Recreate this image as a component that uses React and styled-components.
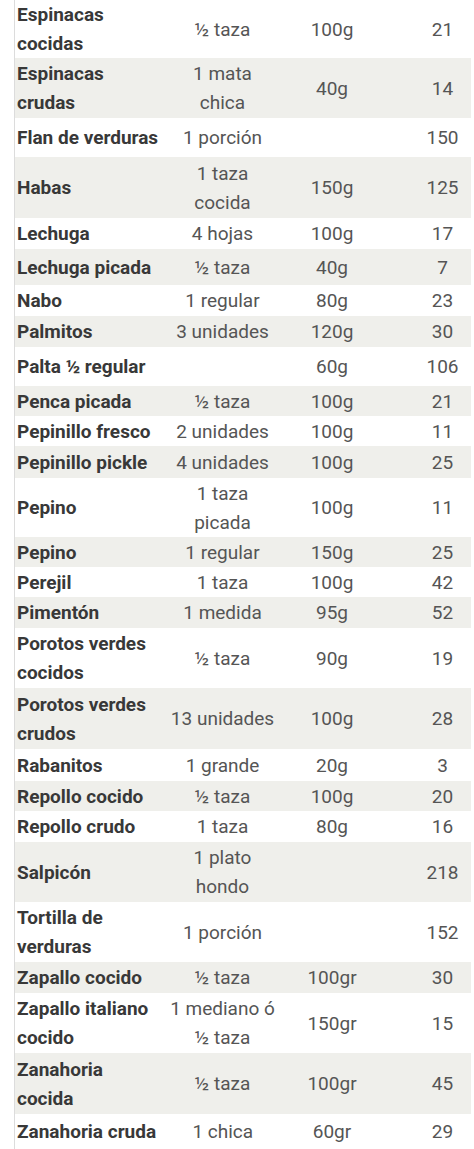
import React from "react";
import styled, { createGlobalStyle } from "styled-components";

const Global = createGlobalStyle`
  html, body { margin: 0; padding: 0; background: #ffffff; }
  body { font-family: Roboto, "Liberation Sans", Arial, sans-serif; }
`;

const Page = styled.div`
  width: 474px;
  height: 1149px;
  overflow: hidden;
  background: #ffffff;
`;

const Table = styled.table`
  margin-left: 14px;
  width: 456px;
  border-collapse: collapse;
  table-layout: fixed;
  border-left: 1px solid #dcdcdc;
  font-size: 19px;
  line-height: 29px;
`;

const Row = styled.tr`
  height: ${(p) => p.$h}px;
  background: ${(p) => (p.$shade ? "#efefeb" : "#ffffff")};
`;

const NameCell = styled.td`
  width: 148px;
  padding: 0 0 0 2px;
  font-weight: 700;
  color: #383838;
  white-space: pre-line;
  vertical-align: middle;
  text-align: left;
`;

const ValueCell = styled.td`
  width: ${(p) => p.$w - (p.$pl || 0)}px;
  padding: 0 0 0 ${(p) => p.$pl || 0}px;
  font-weight: 400;
  color: #555555;
  white-space: pre-line;
  vertical-align: middle;
  text-align: center;
`;

const rows = [
  ["Espinacas\ncocidas", "½ taza", "100g", "21", 58],
  ["Espinacas\ncrudas", "1 mata\nchica", "40g", "14", 60],
  ["Flan de verduras", "1 porción", "", "150", 39],
  ["Habas", "1 taza\ncocida", "150g", "125", 61],
  ["Lechuga", "4 hojas", "100g", "17", 31],
  ["Lechuga picada", "½ taza", "40g", "7", 36],
  ["Nabo", "1 regular", "80g", "23", 31],
  ["Palmitos", "3 unidades", "120g", "30", 31],
  ["Palta ½ regular", "", "60g", "106", 39],
  ["Penca picada", "½ taza", "100g", "21", 30],
  ["Pepinillo fresco", "2 unidades", "100g", "11", 30],
  ["Pepinillo pickle", "4 unidades", "100g", "25", 32],
  ["Pepino", "1 taza\npicada", "100g", "11", 59],
  ["Pepino", "1 regular", "150g", "25", 30],
  ["Perejil", "1 taza", "100g", "42", 30],
  ["Pimentón", "1 medida", "95g", "52", 31],
  ["Porotos verdes\ncocidos", "½ taza", "90g", "19", 60],
  ["Porotos verdes\ncrudos", "13 unidades", "100g", "28", 61],
  ["Rabanitos", "1 grande", "20g", "3", 32],
  ["Repollo cocido", "½ taza", "100g", "20", 30],
  ["Repollo crudo", "1 taza", "80g", "16", 31],
  ["Salpicón", "1 plato\nhondo", "", "218", 60],
  ["Tortilla de\nverduras", "1 porción", "", "152", 60],
  ["Zapallo cocido", "½ taza", "100gr", "30", 31],
  ["Zapallo italiano\ncocido", "1 mediano ó\n½ taza", "150gr", "15", 60],
  ["Zanahoria\ncocida", "½ taza", "100gr", "45", 61],
  ["Zanahoria cruda", "1 chica", "60gr", "29", 35],
];

export default function App() {
  return (
    <Page>
      <Global />
      <Table>
        <tbody>
          {rows.map(([name, portion, grams, kcal, h], i) => (
            <Row key={i} $h={h} $shade={i % 2 === 1}>
              <NameCell>{name}</NameCell>
              <ValueCell $w={115}>{portion}</ValueCell>
              <ValueCell $w={103}>{grams}</ValueCell>
              <ValueCell $w={87} $pl={31}>{kcal}</ValueCell>
            </Row>
          ))}
        </tbody>
      </Table>
    </Page>
  );
}
